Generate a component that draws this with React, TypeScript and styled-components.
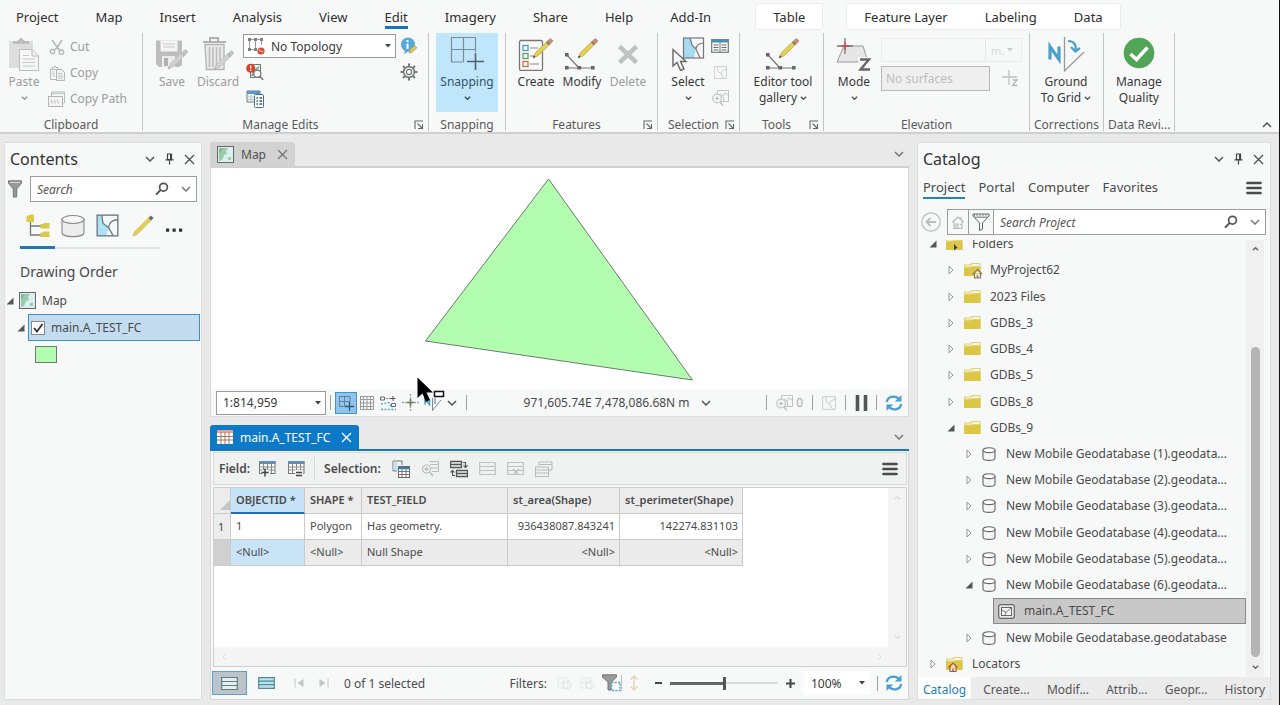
import React from "react";
import styled, { createGlobalStyle, css } from "styled-components";

const Global = createGlobalStyle`
  *, *::before, *::after { box-sizing: border-box; }
  body { margin: 0; background: #e9e9e9; }
  body, button, input, select, table { font-family: "Noto Sans", "Open Sans", sans-serif; font-size: 12px; color: #4a4a4a; }
  button { background: none; border: 0; padding: 0; margin: 0; cursor: default; line-height: 16px; white-space: nowrap; }
  svg { display: block; flex: none; }
  ul { list-style: none; margin: 0; padding: 0; }
  h2, h3 { margin: 0; font-weight: 400; }
`;

/* ---------- icons ---------- */
type IconProps = { w?: number; h?: number; box?: string; children: React.ReactNode };
const Icon = ({ w = 16, h = 16, box, children }: IconProps) => (
  <svg width={w} height={h} viewBox={box || `0 0 ${w} ${h}`} fill="none" aria-hidden="true">{children}</svg>
);

const Chevron = ({ up, color = "#555", w = 10 }: { up?: boolean; color?: string; w?: number }) => (
  <Icon w={w} h={w === 10 ? 6 : 4} box="0 0 10 6">
    <path d={up ? "M1 5L5 1L9 5" : "M1 1L5 5L9 1"} stroke={color} strokeWidth={w === 10 ? 1.5 : 2} />
  </Icon>
);
const Caret = ({ color = "#444" }: { color?: string }) => <Icon w={6} h={4}><path d="M0 0H6L3 3.5Z" fill={color} /></Icon>;
const Launch = () => (
  <Icon w={10} h={10}><path d="M1 9V1H9M3.5 3.5L8 8M8.5 4V8.5H4" stroke="#666" strokeWidth="1.1" /></Icon>
);
const Close = ({ color = "#555" }: { color?: string }) => (
  <Icon w={11} h={11}><path d="M1 1L10 10M10 1L1 10" stroke={color} strokeWidth="1.4" /></Icon>
);
const Pin = () => (
  <Icon w={9} h={12}><path d="M2.5 1H6.5V6.5H2.5ZM5.6 1V6.5M0.5 6.8H8.5M4.5 7V11.5" stroke="#444" strokeWidth="1.2" /></Icon>
);
const Magnifier = () => (
  <Icon w={14} h={14}><circle cx="8.5" cy="5.2" r="3.9" stroke="#555" strokeWidth="1.7" /><path d="M5.6 8L1 12.6" stroke="#555" strokeWidth="2" /></Icon>
);
const Burger = () => (
  <Icon w={16} h={14}><path d="M1.5 2H14.5M1.5 7H14.5M1.5 12H14.5" stroke="#4a4a4a" strokeWidth="2.7" strokeLinecap="round" /></Icon>
);
const Funnel = ({ outline }: { outline?: boolean }) => outline ? (
  <Icon w={18} h={18}><path d="M1 1H17V3L10.5 10V16L7.5 17.5V10L1 3Z" stroke="#666" /><path d="M1.5 3.5H16.5L15 5H3Z" fill="#999" /><path d="M2.5 1V3M5 1V3M8 1V3M11 1V3M14 1V3" stroke="#888" /></Icon>
) : (
  <Icon w={14} h={18}><path d="M0.5 0.8H13.5V3.2L8.7 9V17H5.3V9L0.5 3.2Z" fill="#999" stroke="#777" /><path d="M2 2.4H12" stroke="#ddd" /></Icon>
);
const Refresh = () => (
  <Icon w={18} h={18}>
    <path d="M1.8 8C2.5 2.6 9.5 0.8 13.6 4.6M16.2 10C15.5 15.4 8.5 17.2 4.4 13.4" stroke="#4a9fd0" strokeWidth="2.2" />
    <path d="M16.5 1V7.6H9.8ZM1.5 17V10.4H8.2Z" fill="#4a9fd0" />
  </Icon>
);
const MapIcon = () => (
  <Icon w={17} h={17}>
    <rect x="0.5" y="0.5" width="16" height="16" fill="#d9f0ef" stroke="#666" />
    <path d="M2 2H11L9 5L10 8L7 9L6 12L4 15H2ZM11 11H14V14H11Z" fill="#9ccbab" /><path d="M2 2H6L4 6L2 8Z" fill="#86b896" />
  </Icon>
);
const PencilShape = ({ gray }: { gray?: boolean }) => (
  <g>
    <path d="M3 20L5.5 14.5L19 1.5L22 4.2L8.5 17.6Z" fill={gray ? "#d0d0d0" : "#e3cf50"} stroke={gray ? "#bdbdbd" : "#b5a04c"} strokeWidth="0.7" />
    <path d="M17 3.4L19.8 6.3L23.5 3L20.5 0Z" fill={gray ? "#c4c4c4" : "#c98a7d"} />
    <path d="M16 4.4L18.8 7.3L20 6.2L17.2 3.2Z" fill={gray ? "#b5b5b5" : "#777"} />
    <path d="M3 20L4 17.3L5.6 19Z" fill={gray ? "#aaa" : "#444"} />
  </g>
);
const PasteIcon = () => (
  <Icon w={32} h={34}>
    <rect x="1" y="4" width="24" height="27" fill="#dedede" /><path d="M5 4H9L13 0.5L17 4H21V7H5Z" fill="#bdbdbd" />
    <path d="M11.5 12.5H24L30.5 19V33.5H11.5Z" fill="#f7f7f7" stroke="#bababa" /><path d="M24 12.5V19H30.5" stroke="#bababa" />
    <path d="M14.5 18.5H21M14.5 22H27M14.5 25.5H27M14.5 29H27" stroke="#c8c8c8" />
  </Icon>
);
const CutIcon = () => (
  <Icon><path d="M3 1L11 12M13 1L8 9L5 11" stroke="#b5b5b5" strokeWidth="1.5" /><circle cx="3.5" cy="12.5" r="2.2" stroke="#b5b5b5" strokeWidth="1.3" /><circle cx="12.5" cy="13.2" r="2.2" stroke="#b5b5b5" strokeWidth="1.3" /></Icon>
);
const CopyIcon = () => (
  <Icon w={17}><path d="M1.5 4.5H3V2.5H5L6 0.8L7 2.5H9V4.5M1.5 4.5V14.5H7M1.5 4.5H7" stroke="#b5b5b5" /><path d="M3 7H6M3 9H6M3 11H6" stroke="#c8c8c8" /><path d="M7.5 4.5H12.5L15.5 7.5V15.5H7.5Z" fill="#f0f0f0" stroke="#b5b5b5" /><path d="M9 8.5H13M9 11H14M9 13H14" stroke="#c4c4c4" /></Icon>
);
const CopyPathIcon = () => (
  <Icon w={18}><path d="M3.5 5V1H16.5V12H15" stroke="#bbb" /><path d="M4 2.5H16" stroke="#ccc" strokeWidth="1.5" /><rect x="0.5" y="5.5" width="14" height="10" fill="#f4f4f4" stroke="#b5b5b5" /><path d="M3 9L4.5 12.5M6 9L7.5 12.5M9 9L10.5 12.5" stroke="#b5b5b5" /></Icon>
);
const SaveIcon = () => (
  <Icon w={34} h={34}>
    <path d="M1 3.5H27V28L24 30H4L1 27Z" fill="#bdbdbd" /><rect x="5.5" y="3.5" width="17" height="11" fill="#f4f4f4" /><path d="M8 7H20M8 10H20" stroke="#c8c8c8" />
    <rect x="7" y="19" width="13" height="11" fill="#ececec" /><rect x="9" y="21" width="4" height="8" fill="#b0b0b0" />
    <g transform="translate(10 12)"><PencilShape gray /></g>
  </Icon>
);
const DiscardIcon = () => (
  <Icon w={34} h={36}>
    <path d="M9 4V1H17V4M2 5H25" stroke="#b0b0b0" strokeWidth="2" /><path d="M4 7.5H23V32.5H5.5Z" fill="#ebebeb" stroke="#b5b5b5" strokeWidth="1.4" />
    <path d="M8.5 10V30M12 10V30M15.5 10V30M19 10V30" stroke="#bcbcbc" strokeWidth="1.6" />
    <g transform="translate(10 13)"><PencilShape gray /></g>
  </Icon>
);
const TopologyIcon = () => (
  <Icon w={18} h={18}>
    <path d="M2.500 2.500H14.500M2.500 2.500V12.500M8.500 2.500V12.500M2.500 12.500H10M14.500 2.500V8" stroke="#999" />
    <path d="M1 1h3v3h-3zM7 1h3v3h-3zM13 1h3v3h-3zM1 11h3v3h-3zM7 11h3v3h-3z" fill="#808080" />
    <circle cx="14" cy="14" r="3.600" fill="#d9472f" /><path d="M11.700 12.700L16.200 15.200" stroke="#f3d0c8" strokeWidth="1.100" />
  </Icon>
);
const ErrorInspectIcon = () => (
  <Icon w={18} h={18}>
    <rect x="4.5" y="1.5" width="10" height="13" fill="#e6f0e4" stroke="#777" /><path d="M6 13L8 8L13 4" stroke="#6aa584" strokeWidth="1.6" />
    <circle cx="4.7" cy="5.2" r="4.5" fill="#d5472c" /><path d="M4.7 2.5V5.8M4.7 6.8V8" stroke="#fff" strokeWidth="1.3" />
    <circle cx="11.3" cy="10.8" r="3.6" fill="#f8f8f8" stroke="#777" strokeWidth="1.3" /><path d="M14 13.5L17.2 16.8" stroke="#777" strokeWidth="1.6" />
  </Icon>
);
const FieldListIcon = () => (
  <Icon w={18} h={18}>
    <path d="M1 12V1H14V4M1 12H8" stroke="#777" /><rect x="1" y="1" width="13" height="3" fill="#5799cf" /><path d="M2 7H8M2 9.5H8M5 5V12" stroke="#b5c5d0" />
    <rect x="8.5" y="4.5" width="9" height="13" rx="1" fill="#fff" stroke="#3f6e9c" /><path d="M10.5 8h1.6M13.5 8h2.6M10.5 11h1.6M13.5 11h2.6M10.5 14h1.6M13.5 14h2.6" stroke="#456" strokeWidth="1.4" />
  </Icon>
);
const InfoEditIcon = () => (
  <Icon w={18} h={18}>
    <circle cx="8" cy="7.5" r="7" fill="#58a9da" /><path d="M5 13L4 17L9 14Z" fill="#58a9da" /><path d="M7.5 3V5M7.5 6.5V12" stroke="#fff" strokeWidth="2" />
    <path d="M9 16L10 12.6L14.5 8.5L16.8 10.8L12.2 15Z" fill="#e6c85b" stroke="#9c8a4f" strokeWidth="0.7" />
  </Icon>
);
const GearIcon = () => (
  <Icon w={18} h={18}>
    <circle cx="9" cy="9" r="5.4" stroke="#777" strokeWidth="1.6" /><circle cx="9" cy="9" r="2.6" stroke="#777" strokeWidth="1.2" />
    <path d="M9 0.5V4M9 14V17.5M0.5 9H4M14 9H17.5M3 3L5.4 5.4M12.6 12.6L15 15M15 3L12.6 5.4M5.4 12.6L3 15" stroke="#777" strokeWidth="2" />
  </Icon>
);
const SnapIcon = () => (
  <Icon w={34} h={34}><path d="M1.5 0.5H25.5V12.500H1.5ZM13.5 0.5V25M1.5 12.500V25H13.5M25.5 12.500V15" stroke="#7c8c96" strokeWidth="1.2" /><path d="M25.500 16V33M17 24.5H34" stroke="#55626b" strokeWidth="1.6" /></Icon>
);
const CreateIcon = () => (
  <Icon w={36} h={34}>
    <rect x="1.5" y="3.5" width="23" height="30" rx="1.5" fill="#fbfbfb" stroke="#777" strokeWidth="1.3" />
    <rect x="5" y="8.5" width="5" height="5" stroke="#4e9ac5" strokeWidth="1.3" /><rect x="5" y="16.5" width="5" height="5" stroke="#55a05c" strokeWidth="1.3" /><rect x="5" y="24.5" width="5" height="5" stroke="#d46a42" strokeWidth="1.3" />
    <path d="M12 11H20M12 19H16M12 27H21" stroke="#888" strokeWidth="1.2" /><g transform="translate(12 1)"><PencilShape /></g>
  </Icon>
);
const ModifyIcon = () => (
  <Icon w={36} h={34}>
    <path d="M3 18L15 31M2 31H30" stroke="#777" strokeWidth="1.2" /><path d="M1 16h3.6v3.6H1zM1 29h3.6v3.6H1zM13.5 29h3.6v3.6h-3.6zM27 29h3.6v3.6H27z" fill="#666" />
    <g transform="translate(11 1)"><PencilShape /></g>
  </Icon>
);
const DeleteIcon = () => <Icon w={32} h={34}><path d="M7.500 9.500L24.500 25.500M24.500 9.500L7.500 25.500" stroke="#c2c2c2" strokeWidth="4.5" /></Icon>;
const CountyMap = ({ w = 20, h = 20, gray }: { w?: number; h?: number; gray?: boolean }) => (
  <Icon w={w} h={h} box="0 0 20 20">
    {!gray && <path d="M1 1H5L6 8L11 12L9 19H1Z" fill="#aee0f5" />}
    <rect x="1" y="1" width="18" height="18" stroke={gray ? "#c4c4c4" : "#6e7c85"} strokeWidth="1.2" />
    <path d="M5 1L6 8L11 12L15 19M11 12C11 8 14 5 19 5" stroke={gray ? "#c4c4c4" : "#6e7c85"} strokeWidth="1.2" />
  </Icon>
);
const SelectIcon = () => (
  <Icon w={34} h={34}>
    <path d="M13 1H20L21 8L25 12L23 21H13Z" fill="#a6dbf2" /><rect x="12.5" y="1" width="20" height="20" stroke="#777" strokeWidth="1.2" />
    <path d="M19 1L21 8L25 12L29 21M25 12C25 9 28 6 32.5 6" stroke="#777" strokeWidth="1.2" />
    <path d="M2 12.5V29L6 25.5L9.5 33.5L13 32L9.5 24.5H15Z" fill="#f8f8f8" stroke="#666" strokeWidth="1.4" />
  </Icon>
);
const AttrTableIcon = () => (
  <Icon w={18}><rect x="0.7" y="1.7" width="16.6" height="12.6" fill="#fff" stroke="#777" strokeWidth="1.2" /><path d="M0.5 3H17.5" stroke="#4f8cba" strokeWidth="3" /><path d="M9 4V14" stroke="#777" /><path d="M2.5 7H7.5M2.5 9.5H7.5M2.5 12H7.5M10.5 7H15.5M10.5 9.5H15.5M10.5 12H15.5" stroke="#666" strokeWidth="1.2" /></Icon>
);
const ZoomSelIcon = ({ w = 18 }: { w?: number }) => (
  <Icon w={w} h={w} box="0 0 18 18"><rect x="6.5" y="1.5" width="11" height="11" stroke="#bcc6c4" /><path d="M9 5L12 7L14 4L17 6M12 7L13 12" stroke="#bcc6c4" /><circle cx="6" cy="9.5" r="4.3" fill="#f6f7f7" stroke="#c0c6c8" strokeWidth="1.2" /><path d="M6 7.5V11.5M4 9.5H8M9 13L12 16.5" stroke="#bbb" strokeWidth="1.2" /></Icon>
);
const ModeIcon = () => (
  <Icon w={36} h={34}>
    <path d="M8 9H27L32 25H1Z" fill="#e6e6e6" stroke="#999" /><path d="M9 1V17M1 9H17" stroke="#777" strokeWidth="1.300" /><path d="M9 5V13M5 9H13" stroke="#cc4f4f" strokeWidth="1.500" />
    <rect x="22" y="20" width="14" height="14" fill="#f7f8f8" /><path d="M24 22.5H33L24.5 32.5H34" stroke="#666" strokeWidth="2.4" />
  </Icon>
);
const ZPointIcon = () => <Icon w={17} h={17}><path d="M7 0V15M0 7H15" stroke="#c0c0c0" strokeWidth="1.3" /><rect x="9" y="9" width="8" height="8" fill="#f7f8f8" /><path d="M10.5 10H15L10.5 15.5H15.5" stroke="#b8b8b8" strokeWidth="1.3" /></Icon>;
const GroundIcon = () => (
  <Icon w={38} h={36}>
    <path d="M3 22.500V9.500L12 22.500V9.500" stroke="#4d9fca" strokeWidth="3.2" /><path d="M17.500 0V34L37 15" stroke="#999" strokeWidth="1.3" />
    <path d="M21 4C27 4 29.500 8 28.500 13M24 10L28.300 14.500L33 11" stroke="#4d9fca" strokeWidth="2.2" />
  </Icon>
);
const QualityIcon = () => (
  <Icon w={32} h={32}><circle cx="16" cy="16" r="15.3" fill="#52a556" /><path d="M7.500 17L13.500 22.500L24.500 10.500" stroke="#fff" strokeWidth="3.6" /></Icon>
);
const TreeViewIcon = () => (
  <Icon w={24} h={24}><path d="M4.500 8V21H16M4.500 12H16" stroke="#777" strokeWidth="1.3" /><path d="M0.500 1.500H3L4 0.500H8V8H0.500ZM14.500 10H17L18 9H23.500V14.500H14.500ZM14.500 18.500H17L18 17.500H23.500V23H14.500Z" fill="#dcc748" /></Icon>
);
const CylinderIcon = () => (
  <Icon w={24} h={24}><path d="M1 5V18.500C1 24 23 24 23 18.500V5" fill="#ececec" stroke="#888" strokeWidth="1.1" /><ellipse cx="12" cy="5.500" rx="11" ry="4" fill="#f8f8f8" stroke="#888" strokeWidth="1.1" /></Icon>
);
const PencilIcon = () => (
  <Icon w={22} h={22}><path d="M1 21L2.500 16.800L17.500 2L20 4.500L5 19.500Z" fill="#e3cf50" stroke="#c0ab48" strokeWidth="0.6" /><path d="M16.500 3L19 5.500L21.500 3L19 0.500Z" fill="#6b6b6b" /></Icon>
);
const DotsIcon = () => <Icon w={18} h={4}><path d="M1 0.500h3.200v3.200H1zM7.500 0.500h3.200v3.200H7.500zM14 0.500h3.200v3.200H14z" fill="#333" /></Icon>;
const OpenTri = () => <Icon w={8} h={8}><path d="M7.500 0.500V7.500H0.500Z" fill="#555" /></Icon>;
const ClosedTri = () => <Icon w={8} h={10}><path d="M2 1L6 5L2 9Z" stroke="#9a9a9a" /></Icon>;
const HouseShape = ({ color }: { color: string }) => (
  <g><path d="M0.500 5.500L5 1.200L9.500 5.500M2 4.500V9.500H8V4.500" fill="#f3efe8" stroke={color} strokeWidth="1.2" /><path d="M5 9.500V6.500" stroke={color} strokeWidth="1.500" /></g>
);
const FolderIcon = ({ mark }: { mark?: "home" | "link" | "locator" }) => (
  <Icon w={20} h={18}>
    <path d="M0 3.500H6L8 2H16.500V15H0Z" fill="#e0cf70" /><path d="M1 4.500H7L9 3H15.500V5.500H1Z" fill="#fbf8e4" /><path d="M0 7H6.500L8.500 5.500H16.500V15H0Z" fill="#dcc645" />
    {mark === "home" && <g transform="translate(8.500 7.500)"><HouseShape color="#8a7560" /></g>}
    {mark === "locator" && <g transform="translate(2 7)"><HouseShape color="#b05a35" /></g>}
    {mark === "link" && <path d="M8 9V15.500L11.500 12.500Z" fill="#444" />}
  </Icon>
);
const DbIcon = () => (
  <Icon w={14} h={14}><path d="M1 3V11C1 14.200 13 14.200 13 11V3" fill="#f6f6f6" stroke="#666" strokeWidth="1.1" /><ellipse cx="7" cy="3.200" rx="6" ry="2.400" fill="#fff" stroke="#666" strokeWidth="1.1" /></Icon>
);
const FeatureClassIcon = () => (
  <Icon w={17} h={15}><rect x="0.700" y="0.700" width="15.600" height="13.600" rx="2" stroke="#666" strokeWidth="1.200" fill="#e8e8e8" /><rect x="3.500" y="3.500" width="10" height="8" stroke="#666" fill="#f4f4f4" /><path d="M4 6L8 8.500L13 4M8 8.500L7 11" stroke="#777" /></Icon>
);
const BackIcon = () => <Icon w={20} h={20}><circle cx="10" cy="10" r="9.200" stroke="#bdbdbd" strokeWidth="1.200" /><path d="M15 10H6M9.500 6L5.500 10L9.500 14" stroke="#bdbdbd" strokeWidth="1.800" /></Icon>;
const HomeIcon = () => <Icon w={12} h={13}><path d="M0.500 6L6 1L11.500 6M2 5.500V12.500H10V5.500M4 12V8H6V12M9 3V1M7.500 8.500H9" stroke="#b5b5b5" strokeWidth="1.100" /></Icon>;
const GridIcon = ({ stroke = "#9a9a9a" }: { stroke?: string }) => <Icon w={14} h={14}><path d="M0.500 0.500H13.500V13.500H0.500ZM3.500 0V14M7 0V14M10.500 0V14M0 3.500H14M0 7H14M0 10.500H14" stroke={stroke} /></Icon>;
const SnapSmall = () => <Icon w={16} h={16}><path d="M1.500 1.500H12V6.500H1.500ZM6.500 1.500V11.500H1.500V6.500" stroke="#5f819a" /><path d="M11.500 7V16M7 11.500H16" stroke="#34556d" strokeWidth="1.300" /></Icon>;
const ConstraintIcon = () => <Icon w={18} h={16}><path d="M1.500 2h4v3h-4zM12.500 8.500h4v3h-4z" stroke="#666" /><path d="M7 3.500H12" stroke="#777" strokeDasharray="2 1" /><path d="M14 1V6M11.500 3.500H16.500" stroke="#555" /><path d="M2 14.500H17M2 9L10 7.500L13 13" stroke="#58a5c9" strokeWidth="1.400" strokeDasharray="2 1.500" /></Icon>;
const DynConstraint = () => <Icon w={17} h={17}><path d="M8.500 0V17M0 8.500H17" stroke="#9aa694" strokeWidth="1.300" strokeDasharray="2 1" /><path d="M8.500 5V12M5 8.500H12" stroke="#718268" strokeWidth="1.600" /></Icon>;
const InferenceIcon = () => <Icon w={18} h={16}><path d="M1 9.500V4L5.500 9.500V4" stroke="#4d9fca" strokeWidth="1.600" /><path d="M8.500 3V15.500L17 5" stroke="#888" /><path d="M11 3V9" stroke="#4d9fca" strokeWidth="1.300" /></Icon>;
const PauseIcon = () => <Icon w={13} h={16}><path d="M2.500 0V16M10.500 0V16" stroke="#555" strokeWidth="3.600" /></Icon>;
const TableTabIcon = () => <Icon w={16} h={14}><rect x="0" y="0" width="16" height="14" fill="#fff" /><path d="M0 1.500H16" stroke="#e8a08a" strokeWidth="3" /><path d="M0 6.500H16M0 10H16M4 2V14M8 2V14M12 2V14" stroke="#9a7a70" /></Icon>;
const FieldIcon = ({ calc }: { calc?: boolean }) => (
  <Icon w={17} h={17}><rect x="0.500" y="1.500" width="15.500" height="12" fill="#fff" stroke="#777" /><path d="M0 2.500H16.500" stroke="#5e8fb4" strokeWidth="3" /><path d="M0 7H16M0 10H16M4.500 3V13M8.500 3V13M12.500 3V13" stroke="#888" />
    <rect x={calc ? 7 : 3} y="10" width="8" height="7" fill="#f0f0f0" /><path d={calc ? "M8 12.500H14M8 15.500H14" : "M6 8.500V16.500M2.500 12.500H9.500"} stroke="#444" strokeWidth="1.500" /></Icon>
);
const SelAttrIcon = () => <Icon w={18} h={18}><path d="M1 1H10V5M1 1V11H5" stroke="#777" /><path d="M1.500 1.500L5 2L6 10H1.500Z" fill="#bfe3f0" /><rect x="6.500" y="6.500" width="11" height="11" fill="#fff" stroke="#666" /><path d="M6 8H18" stroke="#3f7ba8" strokeWidth="2.500" /><path d="M6 11.500H18M6 14.500H18M10 9V17M14 9V17" stroke="#777" /></Icon>;
const ZoomToIcon = () => <Icon w={18} h={18}><path d="M8 1.500H17.500V11.500H11M9 4.500H17M10 8H17" stroke="#bbb" /><circle cx="5.500" cy="9" r="4" fill="#f0f1f1" stroke="#bbb" strokeWidth="1.200" /><path d="M5.500 7V11M3.500 9H7.500M8.500 12L12 16" stroke="#bbb" strokeWidth="1.300" /></Icon>;
const SwitchIcon = () => <Icon w={18} h={18}><path d="M0.500 1.500H11.500V7.500H0.500ZM0.500 4.500H11.500M6.500 10.500H17.500V16.500H6.500ZM6.500 13.500H17.500" stroke="#555" strokeWidth="1.300" /><path d="M13 2.500H15.500V7M13.500 5.500L15.500 7.500L17.500 5.500M5 15.500H2.500V11M0.500 12.500L2.500 10.500L4.500 12.500" stroke="#555" strokeWidth="1.100" /></Icon>;
const RowsIcon = ({ x, color = "#c2c2c2", fill }: { x?: boolean; color?: string; fill?: string }) => (
  <Icon w={17} h={15}><path d="M0.700 1.500H16.300V13.500H0.700ZM0.700 5.500H16.300M0.700 9.500H16.300" stroke={color} strokeWidth="1.200" fill={fill} />{x && <path d="M6 8L12 14M12 8L6 14" stroke={color} strokeWidth="1.600" />}</Icon>
);
const SelectedRowsIcon = () => <Icon w={17} h={12}><path d="M0.700 0.700H16.300V11.300H0.700Z" stroke="#4f8a9c" strokeWidth="1.200" fill="#bfe3ee" /><path d="M0.700 4.200H16.300M0.700 7.700H16.300" stroke="#4f8a9c" strokeWidth="1.200" /></Icon>;
const CopyRowsIcon = () => <Icon w={18} h={16}><path d="M4 5V1H17V9H14M5 3.500H17" stroke="#bbb" /><path d="M0.500 6H13.500V15.500H0.500ZM0.500 9H13.500M0.500 12H13.500" stroke="#bbb" /></Icon>;
const StepIcon = ({ next }: { next?: boolean }) => <Icon w={10} h={10}><path d={next ? "M9 0.500V9.500" : "M1 0.500V9.500"} stroke="#c4c4c4" /><path d={next ? "M0.500 1V9L6.500 5Z" : "M9.500 1V9L3.500 5Z"} fill="#c4c4c4" /></Icon>;
const FilterSelIcon = () => <Icon w={20} h={18}><path d="M0.500 0.800H14.500V3.200L9.500 8V16H6V8L0.500 3.200Z" fill="#999" stroke="#777" /><path d="M9.500 8.500H18V16.500H9.500Z" fill="#fff" stroke="#4d9fca" strokeWidth="1.400" strokeDasharray="2 1.200" /><path d="M19.500 1V17" stroke="#bbb" /></Icon>;
const UpDownIcon = () => <Icon w={10} h={16}><path d="M5 1V15M1.500 4.500L5 1L8.500 4.500M1.500 11.500L5 15L8.500 11.500" stroke="#ead2c0" strokeWidth="1.500" /></Icon>;
const GhostIcon = () => <Icon w={16} h={16}><path d="M2 3H12V13H2ZM7 3V13M2 8H12" stroke="#e6e8e6" /><circle cx="11" cy="10" r="4" stroke="#e2e4e2" /></Icon>;

/* ---------- shell ---------- */
const Page = styled.div`
  min-height: 100vh; display: flex; flex-direction: column; background: #e9e9e9; border-right: 1px solid #111; overflow: hidden;
`;
const Ribbon = styled.header`background: #f7f8f8; border-bottom: 2px solid #cfcfcf;`;
const Tabs = styled.nav`display: flex; height: 33px; align-items: flex-start; padding: 3px 0 0 16px; gap: 37px;`;
const Tab = styled.button<{ $active?: boolean }>`
  font-size: 13px; line-height: 20px; height: 26px; padding: 4px 0 0; color: #2e2e2e;
  border-bottom: 3px solid ${p => (p.$active ? "#1a74bb" : "transparent")};
`;
const TabBox = styled.div<{ $first?: boolean }>`
  display: flex; gap: 37px; background: #fff; border: 1px solid #ececec; border-radius: 3px; height: 27px; padding: 0 17px;
  ${p => (p.$first ? css`margin-left: 7px;` : css`margin-left: -14px;`)}
  ${Tab} { padding: 3px 0 0; height: 25px; }
`;
const Groups = styled.div`display: flex; height: 99px;`;
const GroupBox = styled.section<{ $w: number }>`
  flex: 0 0 ${p => p.$w}px; display: flex; flex-direction: column; border-right: 1px solid #c4c4c4; height: 98px;
`;
const GroupBody = styled.div<{ $pad?: number; $gap?: number }>`display: flex; height: 83px; padding: 0 0 0 ${p => p.$pad || 0}px; gap: ${p => p.$gap || 0}px;`;
const GroupFoot = styled.div`display: flex; align-items: center; height: 15px; padding: 2px 4px 0; color: #5a5a5a;`;
const GroupName = styled.h3`flex: 1; font-size: 12px; line-height: 16px; text-align: center; white-space: nowrap; color: #5a5a5a;`;
const Group = ({ w, name, launch, pad, gap, children }: { w: number; name: string; launch?: boolean; pad?: number; gap?: number; children: React.ReactNode }) => (
  <GroupBox $w={w}>
    <GroupBody $pad={pad} $gap={gap}>{children}</GroupBody>
    <GroupFoot><GroupName>{name}</GroupName>{launch && <button aria-label={`${name} options`}><Launch /></button>}</GroupFoot>
  </GroupBox>
);
const Big = styled.button<{ $w: number; $on?: boolean; $off?: boolean }>`
  width: ${p => p.$w}px; height: 79px; display: flex; flex-direction: column; align-items: center; padding-top: 4px;
  color: ${p => (p.$off ? "#9c9c9c" : p.$on ? "#35536a" : "#383838")}; background: ${p => (p.$on ? "#bfe6fb" : "none")};
  line-height: 16px;
  > span:first-child { height: 37px; display: flex; align-items: flex-start; }
  > span.more { height: 10px; display: flex; align-items: flex-end; }
`;
const Lines = styled.span`
  display: flex; flex-direction: column; align-items: center; line-height: 16px;
  > span { display: flex; align-items: center; gap: 3px; height: 16px; }
`;
const Stack = styled.div<{ $gap?: number; $top?: number }>`display: flex; flex-direction: column; gap: ${p => p.$gap || 0}px; padding-top: ${p => p.$top || 0}px;`;
const Small = styled.button`display: flex; align-items: center; gap: 4px; height: 26px; color: #9c9c9c; > span:first-child { width: 18px; display: flex; justify-content: center; }`;
const IconBtn = styled.button<{ $w?: number; $h?: number; $on?: boolean }>`
  width: ${p => p.$w || 18}px; height: ${p => p.$h || 26}px; display: flex; align-items: center; justify-content: center; flex: none;
  ${p => p.$on && css`background: #8fc5ec; border: 1px solid #4a92c6;`}
`;
const Combo = styled.label<{ $w: number; $h: number; $plain?: boolean }>`
  display: flex; align-items: center; gap: 3px; width: ${p => p.$w}px; height: ${p => p.$h}px; padding: 0 4px 0 3px; background: #fff; flex: none;
  border: 1px solid ${p => (p.$plain ? "transparent" : "#9a9a9a")};
  select { flex: 1; min-width: 0; border: 0; appearance: none; background: none; outline: 0; padding: 0 0 0 3px; color: #3a3a3a; height: 20px; }
`;
const ElevInput = styled.input`
  width: 109px; height: 25px; border: 1px solid #b9b9b9; background: #efefef; padding: 0 4px; &::placeholder { color: #bdbdbd; opacity: 1; }
`;
const ElevTop = styled.div`
  display: flex; height: 24px; width: 141px; border: 1px solid #ebebeb;
  input { flex: 1; min-width: 0; border: 0; background: none; }
  select { width: 35px; height: 22px; border: 0; border-left: 1px solid #e8e8e8; appearance: none; background: none; padding: 0 0 0 5px; font-size: 11px; opacity: 1; }
  select:disabled { color: #d8d8d8; }
`;
const ElevSel = styled.span`display: flex; align-items: center; svg { margin-left: -13px; margin-right: 8px; }`;
const Collapse = styled.div`flex: 1; display: flex; justify-content: flex-end; align-items: flex-end; padding: 0 7px 4px 0;`;

const Workspace = styled.main`flex: 1; display: flex; gap: 8px; padding: 8px 8px 5px 4px; min-height: 0;`;
const Pane = styled.aside<{ $w: number }>`
  flex: 0 0 ${p => p.$w}px; display: flex; flex-direction: column; background: #f7f8f8; border: 1px solid #dedede; min-width: 0;
`;
const PaneHead = styled.div`display: flex; align-items: center; height: 32px; padding: 0 6px 0 5px; gap: 10px; flex: none;`;
const PaneTitle = styled.h2`flex: 1; font-size: 16px; line-height: 22px; color: #333;`;
const HeadButtons = () => (
  <>
    <button aria-label="Menu"><Chevron /></button>
    <button aria-label="Auto hide"><Pin /></button>
    <button aria-label="Close"><Close /></button>
  </>
);
const SearchRow = styled.div<{ $gap: number; $top?: number }>`
  display: flex; align-items: center; height: 26px; gap: ${p => p.$gap}px; padding: 0 4px 0 3px; margin-top: ${p => p.$top || 0}px; flex: none;
`;
const SearchBox = styled.div`
  flex: 1; min-width: 0; display: flex; align-items: center; height: 26px; background: #fff; border: 1px solid #9c9c9c; padding-right: 5px; gap: 12px;
  input { flex: 1; min-width: 0; border: 0; background: none; outline: 0; padding: 0 0 0 6px; }
  input::placeholder { font-style: italic; color: #555; opacity: 1; }
`;
const ViewIcons = styled.div`display: flex; margin: 2px 0 0 15px;`;
const ViewIcon = styled.button<{ $on?: boolean; $last?: boolean }>`
  width: 35px; height: 45px; display: flex; align-items: center; justify-content: center;
  ${p => !p.$last && css`border-bottom: ${p.$on ? "3px solid #1e78b4" : "2px solid #e2e2e2"}; padding-top: ${p.$on ? 1 : 0}px;`}
  ${p => p.$last && css`width: 28px; padding-top: 6px;`}
`;
const Order = styled.h3`font-size: 14px; line-height: 20px; margin: 13px 0 0 15px; color: #484848;`;
const ContentsTree = styled.ul`padding: 5px 1px 0 0;`;
const LayerRow = styled.li<{ $indent: number }>`display: flex; align-items: center; height: 27px; gap: 5px; padding-left: ${p => p.$indent}px; > span { padding-left: 1px; }`;
const LayerPick = styled.label`
  flex: 1; display: flex; align-items: center; gap: 6px; height: 27px; background: #c4dcf0; border: 1px solid #3f8fc4; padding-left: 2px; margin-left: -2px;
`;
const Check = styled.span`
  position: relative; width: 14px; height: 14px; display: block;
  input { appearance: none; display: block; width: 14px; height: 14px; margin: 0; background: #fff; border: 1px solid #888; }
  svg { position: absolute; left: 2px; top: 2px; pointer-events: none; }
`;
const Swatch = styled.span`width: 22px; height: 17px; background: #b2fdb0; border: 1px solid #707a70;`;

const Center = styled.div`flex: 1; min-width: 0; display: flex; flex-direction: column; gap: 8px;`;
const View = styled.section`flex: 1 1 0; min-height: 0; display: flex; flex-direction: column; position: relative;`;
const DocTabs = styled.div<{ $blue?: boolean }>`
  display: flex; align-items: stretch; height: 26px; border-bottom: 2px solid ${p => (p.$blue ? "#1a76ba" : "#d0d0d0")}; flex: none;
`;
const DocTab = styled.div<{ $blue?: boolean }>`
  display: flex; align-items: center; gap: 7px; padding: 0 7px; margin-right: auto; border-radius: 3px 3px 0 0;
  background: ${p => (p.$blue ? "#0d7ac9" : "#d2d2d2")}; color: ${p => (p.$blue ? "#fff" : "#505050")};
  button { margin-left: 4px; }
`;
const MapCanvas = styled.div`flex: 1; min-height: 0; background: #fff; border: 1px solid #dcdcdc; border-top: 0; border-bottom: 0; svg { width: 100%; height: 100%; }`;
const MapBar = styled.div`display: flex; align-items: center; height: 28px; background: #f7f8f8; border: 1px solid #dcdcdc; border-top: 0; padding: 0 5px; flex: none;`;
const Spacer = styled.span`flex: 1;`;
const VBar = styled.span<{ $m?: number; $soft?: boolean }>`
  width: 1px; height: ${p => (p.$soft ? 24 : 15)}px; background: ${p => (p.$soft ? "#d8d8d8" : "#a0a0a0")}; margin: 0 ${p => p.$m ?? 5}px;
`;
const Tools = styled.div<{ $gap: number }>`display: flex; align-items: center; gap: ${p => p.$gap}px;`;
const Coords = styled.button`display: flex; align-items: center; gap: 11px;`;
const Count = styled.button`display: flex; align-items: center; gap: 3px; color: #aaa;`;
const Pointer = styled.span`position: absolute; left: 207px; top: 235px; pointer-events: none;`;

const TableFrame = styled.div`flex: 1; display: flex; flex-direction: column; background: #f7f8f8; border: 1px solid #d6d6d6; border-top: 0; padding: 1px 0 0 2px; min-height: 0;`;
const TableTools = styled.div`display: flex; align-items: center; height: 33px; background: #f0f1f1; border: 1px solid #d8d8d8; padding: 0 8px 0 5px; margin: 0 1px 2px 0; b { color: #4c4c4c; font-size: 12px; font-weight: 600; }`;
const GridArea = styled.div`flex: 1; display: flex; background: #fff; border: 1px solid #cfcfcf; border-width: 1px 1px 0 1px; margin-right: 1px; min-height: 0; align-items: stretch;`;
const DataTable = styled.table`
  border-collapse: separate; border-spacing: 0; table-layout: fixed; width: 529px; font-size: 11px; align-self: flex-start;
  th, td { height: 26px; padding: 0 4px 1px 5px; border-right: 1px solid #cbcbcb; border-bottom: 1px solid #cbcbcb; white-space: nowrap; text-align: left; line-height: 16px; }
  thead th { background: #ececec; font-size: 11px; font-weight: 600; padding-right: 0; }
  thead th:nth-child(2) { background: #c6e2f6; border-bottom: 2px solid #1e6fae; }
  td:nth-child(n + 5) { text-align: right; }
  tbody th { background: #ececec; font-weight: 400; padding: 0 0 0 4px; font-size: 11px; }
  tbody tr:nth-child(2) td { background: #ebebeb; }
  tbody tr:nth-child(2) th { background: #d0d0d0; }
  tbody tr:nth-child(2) td:nth-child(2) { background: #c9e4f7; }
`;
const Corner = styled.span`display: flex; justify-content: flex-end; align-items: flex-end; height: 20px;`;
const GridScroll = styled.div`margin-left: auto; width: 18px; background: #f4f4f4; display: flex; flex-direction: column; justify-content: space-between; align-items: center; padding: 8px 0;`;
const HScroll = styled.div`height: 20px; background: #f4f4f4; border: 1px solid #cfcfcf; border-top: 0; margin-right: 1px; display: flex; justify-content: space-between; align-items: center; padding: 0 24px 0 8px;`;
const TableStatus = styled.footer`display: flex; align-items: center; height: 32px; padding: 0 5px 0 0; margin-left: -1px;`;
const ViewToggle = styled.button<{ $on?: boolean }>`
  width: 35px; height: 24px; display: flex; align-items: center; justify-content: center;
  ${p => p.$on && css`background: #bcc3cb; border: 1px solid #5ba3c6;`}
`;
const Zoom = styled.input`
  appearance: none; width: 108px; height: 14px; margin: 0 8px; background: linear-gradient(#666, #666) 0 50% / 50% 3px no-repeat, linear-gradient(#dcdcdc, #dcdcdc) 0 50% / 100% 2px no-repeat;
  &::-webkit-slider-thumb { appearance: none; width: 3px; height: 13px; background: #555; }
`;
const Push = styled.span<{ $w: number }>`flex: none; width: ${p => p.$w}px;`;

const CatTabs = styled.div`display: flex; align-items: flex-start; height: 32px; gap: 13px; padding: 0 8px 0 5px; margin-top: 2px; flex: none;`;
const CatTab = styled.button<{ $on?: boolean }>`height: 22px; font-size: 13px; line-height: 18px; border-bottom: 2px solid ${p => (p.$on ? "#2482bd" : "transparent")};`;
const Segment = styled.button<{ $off?: boolean }>`
  display: flex; align-items: center; justify-content: center; height: 24px; width: ${p => (p.$off ? 21 : 25)}px; background: #f7f8f8; border-right: 1px solid #9c9c9c; flex: none;
`;
const TreeArea = styled.div`flex: 1; display: flex; min-height: 0; overflow: hidden; margin-top: 5px;`;
const Tree = styled.ul`flex: 1; min-width: 0; display: grid; grid-template-rows: repeat(17, 1fr); margin-top: -9px;`;
const Node = styled.li<{ $level: number }>`display: flex; align-items: center; padding-left: ${p => 11 + p.$level * 18}px; min-height: 0;`;
const NodeLabel = styled.button<{ $gap: number; $sel?: boolean }>`
  display: flex; align-items: center; gap: ${p => p.$gap}px; margin-left: 9px; height: 26px; padding-right: 2px; min-width: 0;
  ${p => p.$sel && css`flex: 1; background: #c8c8c8; border: 1px solid #888; padding-left: 4px; margin-left: 10px; margin-right: 0;`}
`;
const Expander = styled.button`width: 8px; flex: none; display: flex; justify-content: center;`;
const Scroll = styled.div`width: 18px; margin-right: 6px; background: #f0f0f0; display: flex; flex-direction: column; align-items: center; justify-content: space-between; padding: 7px 0 8px;`;
const ScrollThumb = styled.span`width: 9px; flex: 0 0 310px; border-radius: 5px; background: #b4b4b4; margin: auto 0 8px;`;
const DockTabs = styled.div`display: flex; justify-content: space-between; height: 22px; background: #ebebeb; flex: none;`;
const DockTab = styled.button<{ $on?: boolean }>`padding: 3px 5px 0; color: ${p => (p.$on ? "#1c7cb8" : "#555")}; background: ${p => (p.$on ? "#fff" : "none")};`;

type TreeNode = { label: string; level: number; icon: React.ReactNode; open?: boolean; gap: number; sel?: boolean };
const nodes: TreeNode[] = [
  { label: "Folders", level: 0, icon: <FolderIcon mark="link" />, open: true, gap: 6 },
  { label: "MyProject62", level: 1, icon: <FolderIcon mark="home" />, gap: 6 },
  { label: "2023 Files", level: 1, icon: <FolderIcon />, gap: 6 },
  ...["GDBs_3", "GDBs_4", "GDBs_5", "GDBs_8"].map(label => ({ label, level: 1, icon: <FolderIcon />, gap: 6 })),
  { label: "GDBs_9", level: 1, icon: <FolderIcon />, open: true, gap: 6 },
  ...[1, 2, 3, 4, 5, 6].map(n => ({ label: `New Mobile Geodatabase (${n}).geodata...`, level: 2, icon: <DbIcon />, open: n === 6, gap: 10 })),
  { label: "main.A_TEST_FC", level: 3, icon: <FeatureClassIcon />, gap: 9, sel: true },
  { label: "New Mobile Geodatabase.geodatabase", level: 2, icon: <DbIcon />, gap: 10 },
  { label: "Locators", level: 0, icon: <FolderIcon mark="locator" />, gap: 6 },
];

export default function App() {
  return (
    <>
      <Global />
      <Page>
        <Ribbon>
          <Tabs>
            {["Project", "Map", "Insert", "Analysis", "View", "Edit", "Imagery", "Share", "Help", "Add-In"].map(t => (
              <Tab key={t} $active={t === "Edit"}>{t}</Tab>
            ))}
            <TabBox $first><Tab>Table</Tab></TabBox>
            <TabBox><Tab>Feature Layer</Tab><Tab>Labeling</Tab><Tab>Data</Tab></TabBox>
          </Tabs>
          <Groups>
            <Group w={143} name="Clipboard" pad={3} gap={3}>
              <Big $w={42} $off><span><PasteIcon /></span>Paste<span className="more"><Chevron w={7} color="#999" /></span></Big>
              <Stack $top={1}>
                <Small><span><CutIcon /></span>Cut</Small>
                <Small><span><CopyIcon /></span>Copy</Small>
                <Small><span><CopyPathIcon /></span>Copy Path</Small>
              </Stack>
            </Group>
            <Group w={286} name="Manage Edits" launch pad={8}>
              <Big $w={42} $off><span><SaveIcon /></span>Save</Big>
              <Big $w={50} $off><span><DiscardIcon /></span>Discard</Big>
              <Stack $top={1} $gap={2}>
                <Combo $w={153} $h={24}>
                  <TopologyIcon />
                  <select aria-label="Topology"><option>No Topology</option></select>
                  <Caret />
                </Combo>
                <IconBtn $w={24} $h={24} aria-label="Error inspector"><ErrorInspectIcon /></IconBtn>
                <IconBtn $w={24} $h={26} aria-label="Attribute fields"><FieldListIcon /></IconBtn>
              </Stack>
              <Stack>
                <IconBtn $w={25} aria-label="Status"><InfoEditIcon /></IconBtn>
                <IconBtn $w={25} aria-label="Settings"><GearIcon /></IconBtn>
              </Stack>
            </Group>
            <Group w={77} name="Snapping" pad={7}>
              <Big $w={62} $on><span><SnapIcon /></span>Snapping<span className="more"><Chevron w={7} color="#35536a" /></span></Big>
            </Group>
            <Group w={152} name="Features" launch pad={7}>
              <Big $w={46}><span><CreateIcon /></span>Create</Big>
              <Big $w={46}><span><ModifyIcon /></span>Modify</Big>
              <Big $w={46} $off><span><DeleteIcon /></span>Delete</Big>
            </Group>
            <Group w={82} name="Selection" launch pad={7}>
              <Big $w={46}><span><SelectIcon /></span>Select<span className="more"><Chevron w={7} /></span></Big>
              <Stack>
                <IconBtn aria-label="Attributes"><AttrTableIcon /></IconBtn>
                <IconBtn aria-label="Clear"><CountyMap w={13} h={13} gray /></IconBtn>
                <IconBtn aria-label="Zoom to selection"><ZoomSelIcon /></IconBtn>
              </Stack>
            </Group>
            <Group w={84} name="Tools" launch pad={7}>
              <Big $w={72}><span><ModifyIcon /></span><Lines><span>Editor tool</span><span>gallery<Chevron w={7} /></span></Lines></Big>
            </Group>
            <Group w={206} name="Elevation" pad={7} gap={4}>
              <Big $w={46}><span><ModeIcon /></span>Mode<span className="more"><Chevron w={7} /></span></Big>
              <Stack $top={5} $gap={3}>
                <ElevTop>
                  <input aria-label="Elevation value" disabled />
                  <ElevSel><select aria-label="Unit" disabled><option>m.</option></select><Caret color="#ccc" /></ElevSel>
                </ElevTop>
                <Tools $gap={12}>
                  <ElevInput aria-label="Surface" placeholder="No surfaces" disabled />
                  <IconBtn $w={17} aria-label="Get Z"><ZPointIcon /></IconBtn>
                </Tools>
              </Stack>
            </Group>
            <Group w={73} name="Corrections">
              <Big $w={72}><span><GroundIcon /></span><Lines><span>Ground</span><span>To Grid<Chevron w={7} /></span></Lines></Big>
            </Group>
            <Group w={71} name="Data Revi...">
              <Big $w={70}><span><QualityIcon /></span><Lines><span>Manage</span><span>Quality</span></Lines></Big>
            </Group>
            <Collapse><button aria-label="Collapse ribbon"><Chevron up /></button></Collapse>
          </Groups>
        </Ribbon>

        <Workspace>
          <Pane $w={198}>
            <PaneHead><PaneTitle>Contents</PaneTitle><HeadButtons /></PaneHead>
            <SearchRow $gap={8} $top={1}>
              <Funnel />
              <SearchBox><input aria-label="Search" placeholder="Search" /><Magnifier /><Chevron color="#777" /></SearchBox>
            </SearchRow>
            <ViewIcons>
              <ViewIcon $on aria-label="Drawing order"><TreeViewIcon /></ViewIcon>
              <ViewIcon aria-label="Data source"><CylinderIcon /></ViewIcon>
              <ViewIcon aria-label="Selection"><CountyMap w={23} h={23} /></ViewIcon>
              <ViewIcon aria-label="Editing"><PencilIcon /></ViewIcon>
              <ViewIcon $last aria-label="More"><DotsIcon /></ViewIcon>
            </ViewIcons>
            <Order>Drawing Order</Order>
            <ContentsTree>
              <LayerRow $indent={1}><OpenTri /><MapIcon /><span>Map</span></LayerRow>
              <LayerRow $indent={12}>
                <OpenTri />
                <LayerPick>
                  <Check><input type="checkbox" defaultChecked /><Icon w={10} h={10}><path d="M1 5L4 8.500L9.500 1" stroke="#333" strokeWidth="1.800" /></Icon></Check>
                  main.A_TEST_FC
                </LayerPick>
              </LayerRow>
              <LayerRow $indent={30}><Swatch /></LayerRow>
            </ContentsTree>
          </Pane>

          <Center>
            <View>
              <DocTabs>
                <DocTab><MapIcon />Map<button aria-label="Close Map"><Close color="#777" /></button></DocTab>
                <IconBtn $w={20} $h={24} aria-label="Map views"><Chevron color="#777" /></IconBtn>
              </DocTabs>
              <MapCanvas>
                <svg viewBox="0 0 698 221" preserveAspectRatio="xMidYMid slice" role="img" aria-label="Map with one polygon">
                  <path d="M338 11L215 173L482 212Z" fill="#b2fdb0" stroke="#6e7a6e" strokeWidth="1" />
                </svg>
              </MapCanvas>
              <MapBar>
                <Combo $w={110} $h={24}><select aria-label="Scale"><option>1:814,959</option></select><Caret /></Combo>
                <VBar $m={4} />
                <IconBtn $w={22} $h={22} $on aria-label="Snapping"><SnapSmall /></IconBtn>
                <Push $w={3} />
                <Tools $gap={5}>
                  <button aria-label="Grid"><GridIcon /></button>
                  <button aria-label="Constraints"><ConstraintIcon /></button>
                  <button aria-label="Dynamic constraints"><DynConstraint /></button>
                  <button aria-label="Correction"><InferenceIcon /></button>
                  <button aria-label="More tools"><Chevron /></button>
                </Tools>
                <VBar $m={9} />
                <Spacer />
                <Coords>971,605.74E 7,478,086.68N m<Chevron /></Coords>
                <Spacer />
                <VBar $m={8} />
                <Count><ZoomSelIcon />0</Count>
                <VBar $m={9} />
                <button aria-label="Clear selection"><CountyMap w={14} h={14} gray /></button>
                <VBar $m={9} />
                <button aria-label="Pause drawing"><PauseIcon /></button>
                <VBar $m={8} />
                <button aria-label="Refresh"><Refresh /></button>
              </MapBar>
              <Pointer>
                <Icon w={28} h={28}><path d="M0.500 0.500V21L5.500 16.500L9 25L13 23L9.500 15.500H16Z" fill="#000" /><rect x="17.500" y="14.500" width="9" height="5" fill="#fff" stroke="#111" strokeWidth="1.500" /></Icon>
              </Pointer>
            </View>

            <View>
              <DocTabs $blue>
                <DocTab $blue><TableTabIcon />main.A_TEST_FC<button aria-label="Close table"><Close color="#fff" /></button></DocTab>
                <IconBtn $w={20} $h={24} aria-label="Tables"><Chevron color="#777" /></IconBtn>
              </DocTabs>
              <TableFrame>
                <TableTools>
                  <b>Field:</b>
                  <Push $w={9} />
                  <Tools $gap={12}>
                    <button aria-label="Add field"><FieldIcon /></button>
                    <button aria-label="Calculate field"><FieldIcon calc /></button>
                  </Tools>
                  <VBar $m={9} $soft />
                  <b>Selection:</b>
                  <Push $w={11} />
                  <Tools $gap={11}>
                    <button aria-label="Select by attributes"><SelAttrIcon /></button>
                    <button aria-label="Zoom to"><ZoomToIcon /></button>
                    <button aria-label="Switch selection"><SwitchIcon /></button>
                    <button aria-label="Clear rows"><RowsIcon /></button>
                    <button aria-label="Delete rows"><RowsIcon x /></button>
                    <button aria-label="Copy rows"><CopyRowsIcon /></button>
                  </Tools>
                  <Spacer />
                  <button aria-label="Table menu"><Burger /></button>
                </TableTools>
                <GridArea>
                  <DataTable>
                    <colgroup><col width="17" /><col width="74" /><col width="57" /><col width="146" /><col width="112" /><col width="123" /></colgroup>
                    <thead>
                      <tr>
                        <th aria-label="Row"><Corner><Icon w={10} h={10}><path d="M10 0V10H0Z" fill="#c4c4c4" /></Icon></Corner></th>
                        <th>OBJECTID *</th><th>SHAPE *</th><th>TEST_FIELD</th><th>st_area(Shape)</th><th>st_perimeter(Shape)</th>
                      </tr>
                    </thead>
                    <tbody>
                      <tr><th>1</th><td>1</td><td>Polygon</td><td>Has geometry.</td><td>936438087.843241</td><td>142274.831103</td></tr>
                      <tr><th /><td>&lt;Null&gt;</td><td>&lt;Null&gt;</td><td>Null Shape</td><td>&lt;Null&gt;</td><td>&lt;Null&gt;</td></tr>
                    </tbody>
                  </DataTable>
                  <GridScroll><Chevron up w={7} color="#ddd" /><Chevron w={7} color="#ddd" /></GridScroll>
                </GridArea>
                <HScroll><Icon w={5} h={8}><path d="M4 1L1 4L4 7" stroke="#ddd" /></Icon><Icon w={5} h={8}><path d="M1 1L4 4L1 7" stroke="#ddd" /></Icon></HScroll>
                <TableStatus>
                  <ViewToggle $on aria-label="Show all records"><RowsIcon color="#5a7f85" fill="#e8eef0" /></ViewToggle>
                  <Push $w={2} />
                  <ViewToggle aria-label="Show selected records"><SelectedRowsIcon /></ViewToggle>
                  <Push $w={10} />
                  <Tools $gap={15}>
                    <button aria-label="Previous"><StepIcon /></button>
                    <button aria-label="Next"><StepIcon next /></button>
                    <span>0 of 1 selected</span>
                  </Tools>
                  <Spacer />
                  <span>Filters:</span>
                  <Push $w={9} />
                  <Tools $gap={7}>
                    <button aria-label="Time filter"><GhostIcon /></button>
                    <button aria-label="Range filter"><GhostIcon /></button>
                    <button aria-label="Selection filter"><FilterSelIcon /></button>
                    <button aria-label="Extent filter"><UpDownIcon /></button>
                  </Tools>
                  <Push $w={16} />
                  <button aria-label="Zoom out"><Icon w={7} h={8}><path d="M0 4H7" stroke="#444" strokeWidth="2" /></Icon></button>
                  <Zoom type="range" aria-label="Table zoom" defaultValue={50} />
                  <button aria-label="Zoom in"><Icon w={9} h={9}><path d="M0 4.500H9M4.500 0V9" stroke="#444" strokeWidth="2" /></Icon></button>
                  <Push $w={9} />
                  <Combo $w={66} $h={24} $plain><select aria-label="Zoom level"><option>100%</option></select><Caret /></Combo>
                  <VBar $m={7} />
                  <button aria-label="Refresh table"><Refresh /></button>
                </TableStatus>
              </TableFrame>
            </View>
          </Center>

          <Pane $w={354}>
            <PaneHead><PaneTitle>Catalog</PaneTitle><HeadButtons /></PaneHead>
            <CatTabs>
              <CatTab $on>Project</CatTab><CatTab>Portal</CatTab><CatTab>Computer</CatTab><CatTab>Favorites</CatTab>
              <Spacer />
              <IconBtn $w={16} $h={22} aria-label="Catalog menu"><Burger /></IconBtn>
            </CatTabs>
            <SearchRow $gap={6}>
              <button aria-label="Back"><BackIcon /></button>
              <SearchBox>
                <Tools $gap={0}>
                  <Segment $off aria-label="Home"><HomeIcon /></Segment>
                  <Segment aria-label="Filter"><Funnel outline /></Segment>
                  <input aria-label="Search Project" placeholder="Search Project" />
                </Tools>
                <Spacer />
                <Magnifier /><Chevron color="#777" />
              </SearchBox>
            </SearchRow>
            <TreeArea>
              <Tree>
                {nodes.map(n => (
                  <Node key={n.label} $level={n.level}>
                    {!n.sel && <Expander aria-label={`Toggle ${n.label}`}>{n.open ? <OpenTri /> : <ClosedTri />}</Expander>}
                    <NodeLabel $gap={n.gap} $sel={n.sel}>{n.icon}{n.label}</NodeLabel>
                  </Node>
                ))}
              </Tree>
              <Scroll><Chevron up w={7} color="#666" /><ScrollThumb /><Chevron w={7} color="#666" /></Scroll>
            </TreeArea>
            <DockTabs>
              {["Catalog", "Create...", "Modif...", "Attrib...", "Geopr...", "History"].map(t => (
                <DockTab key={t} $on={t === "Catalog"}>{t}</DockTab>
              ))}
            </DockTabs>
          </Pane>
        </Workspace>
      </Page>
    </>
  );
}
